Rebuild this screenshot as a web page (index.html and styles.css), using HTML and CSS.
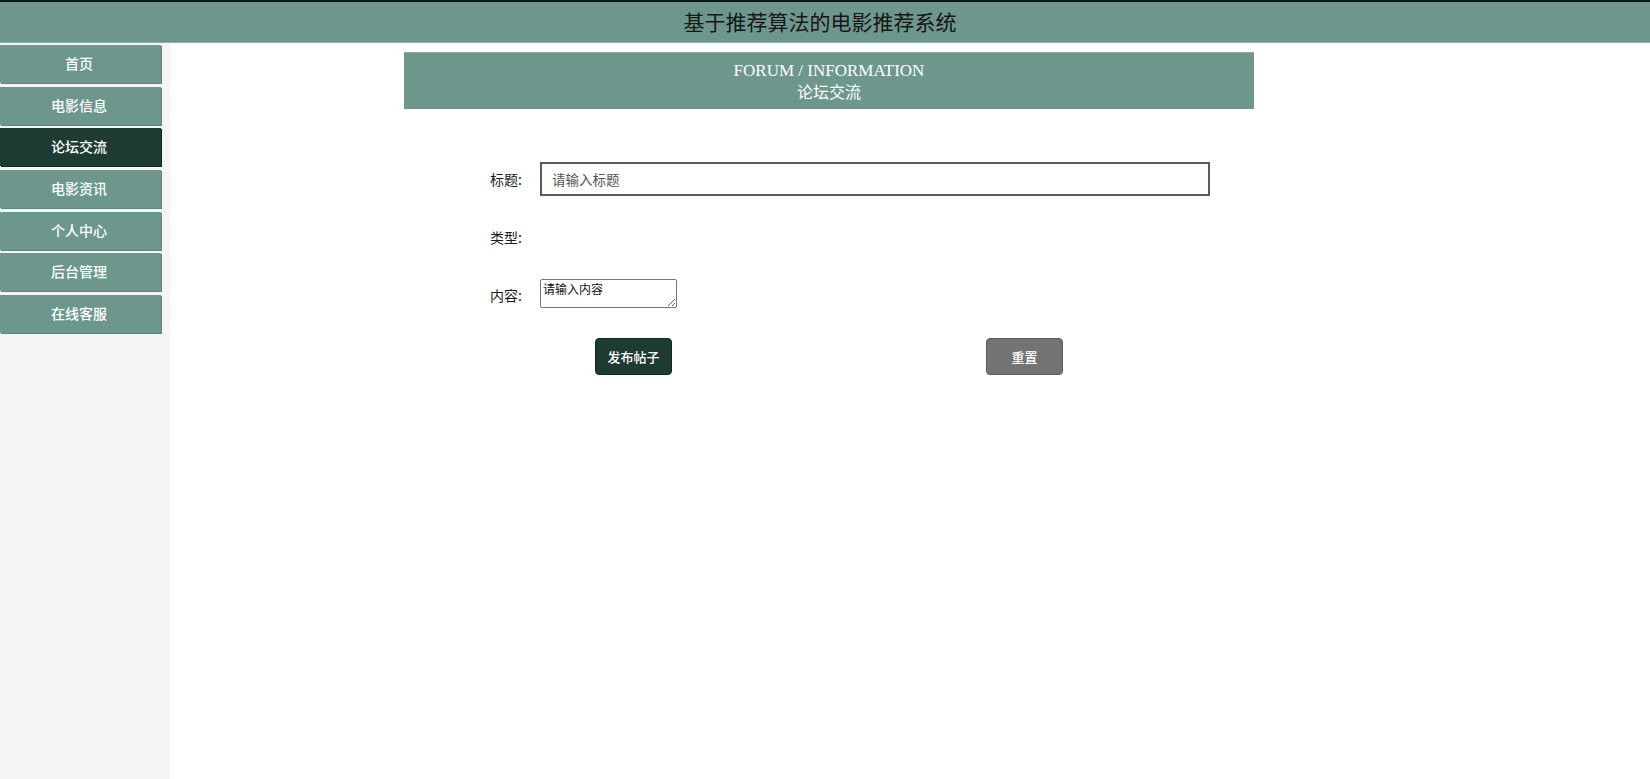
FILE: index.html
```html
<!DOCTYPE html>
<html lang="zh-CN">
<head>
<meta charset="utf-8">
<title>论坛交流</title>
<link rel="stylesheet" href="styles.css">
</head>
<body>
<header class="header">基于推荐算法的电影推荐系统</header>
<div class="layout">
  <aside class="sidebar">
    <a class="nav-item">首页</a>
    <a class="nav-item">电影信息</a>
    <a class="nav-item active">论坛交流</a>
    <a class="nav-item">电影资讯</a>
    <a class="nav-item">个人中心</a>
    <a class="nav-item">后台管理</a>
    <a class="nav-item">在线客服</a>
  </aside>
  <main class="main">
    <div class="banner">
      <div class="banner-en">FORUM / INFORMATION</div>
      <div class="banner-cn">论坛交流</div>
    </div>
    <form class="form">
      <div class="row">
        <label class="label">标题:</label>
        <input class="input" type="text" placeholder="请输入标题">
      </div>
      <div class="row">
        <label class="label">类型:</label>
      </div>
      <div class="row row-text">
        <label class="label">内容:</label>
        <textarea class="textarea" placeholder="请输入内容"></textarea>
      </div>
      <div class="actions">
        <button type="button" class="btn btn-primary">发布帖子</button>
        <button type="button" class="btn btn-reset">重置</button>
      </div>
    </form>
  </main>
</div>
</body>
</html>
```
FILE: styles.css
```css
* { box-sizing: border-box; }
html, body { margin: 0; padding: 0; }
body {
  background: #ffffff;
  font-family: "Noto Sans CJK SC", "Noto Sans", sans-serif;
  color: #222;
}
.header {
  height: 43px;
  border-top: 2px solid #141414;
  border-bottom: 1px solid #8fb0a8;
  background: #6d978d;
  color: #161616;
  font-size: 21px;
  line-height: 39px;
  text-align: center;
  padding-right: 10px;
}
.layout {
  display: flex;
  min-height: calc(100vh - 43px);
}
.sidebar {
  width: 170px;
  flex: none;
  background: #f5f5f5;
  padding-top: 2px;
}
.nav-item {
  display: block;
  width: 161px;
  height: 38px;
  margin-bottom: 3.67px;
  background: #6d978d;
  color: #ffffff;
  font-size: 14px;
  font-weight: 500;
  line-height: 36px;
  text-align: center;
  padding-right: 3px;
  box-shadow: 1px 1px 0 #5f857c;
}
.nav-item.active {
  background: #1d3b33;
  box-shadow: 1px 1px 0 #13271f;
}
.main {
  flex: 1;
  padding-top: 8.5px;
}
.banner {
  margin-left: 234px;
  width: 850px;
  height: 57px;
  background: #6d978d;
  color: #ffffff;
  text-align: center;
  padding-top: 8px;
  border-top: 1px solid #86a9a0;
}
.banner-en {
  font-family: "Liberation Serif", "Times New Roman", serif;
  font-size: 17px;
  line-height: 20px;
}
.banner-cn {
  font-family: "Noto Sans CJK SC", serif;
  font-size: 16px;
  line-height: 20px;
}
.form {
  margin-left: 234px;
  width: 850px;
  margin-top: 53px;
}
.row {
  display: flex;
  align-items: center;
  gap: 18px;
  height: 34px;
  margin-bottom: 24px;
}
.row-text {
  height: 29px;
  margin-top: 25px;
  margin-bottom: 30px;
}
.label {
  width: 118px;
  text-align: right;
  font-size: 14px;
  line-height: 20px;
  color: #1a1a1a;
}
.row-text .label { position: relative; top: 1.5px; }
.input {
  width: 670px;
  height: 34px;
  border: 2px solid #5b5b54;
  padding: 0 10px;
  font-family: "Noto Sans CJK SC", sans-serif;
  font-size: 13.5px;
  color: #333;
  outline: none;
}
.input::placeholder { color: #555; }
.textarea {
  width: 137px;
  height: 29px;
  border: 1px solid #777;
  border-radius: 2px;
  padding: 1px 2px;
  font-family: "Noto Sans CJK SC", sans-serif;
  font-size: 12px;
  line-height: 15px;
  color: #111;
  outline: none;
}
.textarea::placeholder { color: #111; opacity: 1; }
.actions {
  display: flex;
  gap: 314px;
  padding-left: 191px;
}
.btn {
  width: 77px;
  height: 37px;
  border-radius: 4px;
  color: #ffffff;
  font-family: "Noto Sans CJK SC", sans-serif;
  font-size: 13px;
  font-weight: 500;
  cursor: pointer;
  padding: 0;
}
.btn-primary {
  background: #1d3b33;
  border: 1px solid #132820;
}
.btn-reset {
  background: #737373;
  border: 1px solid #5c5c5c;
}
```
